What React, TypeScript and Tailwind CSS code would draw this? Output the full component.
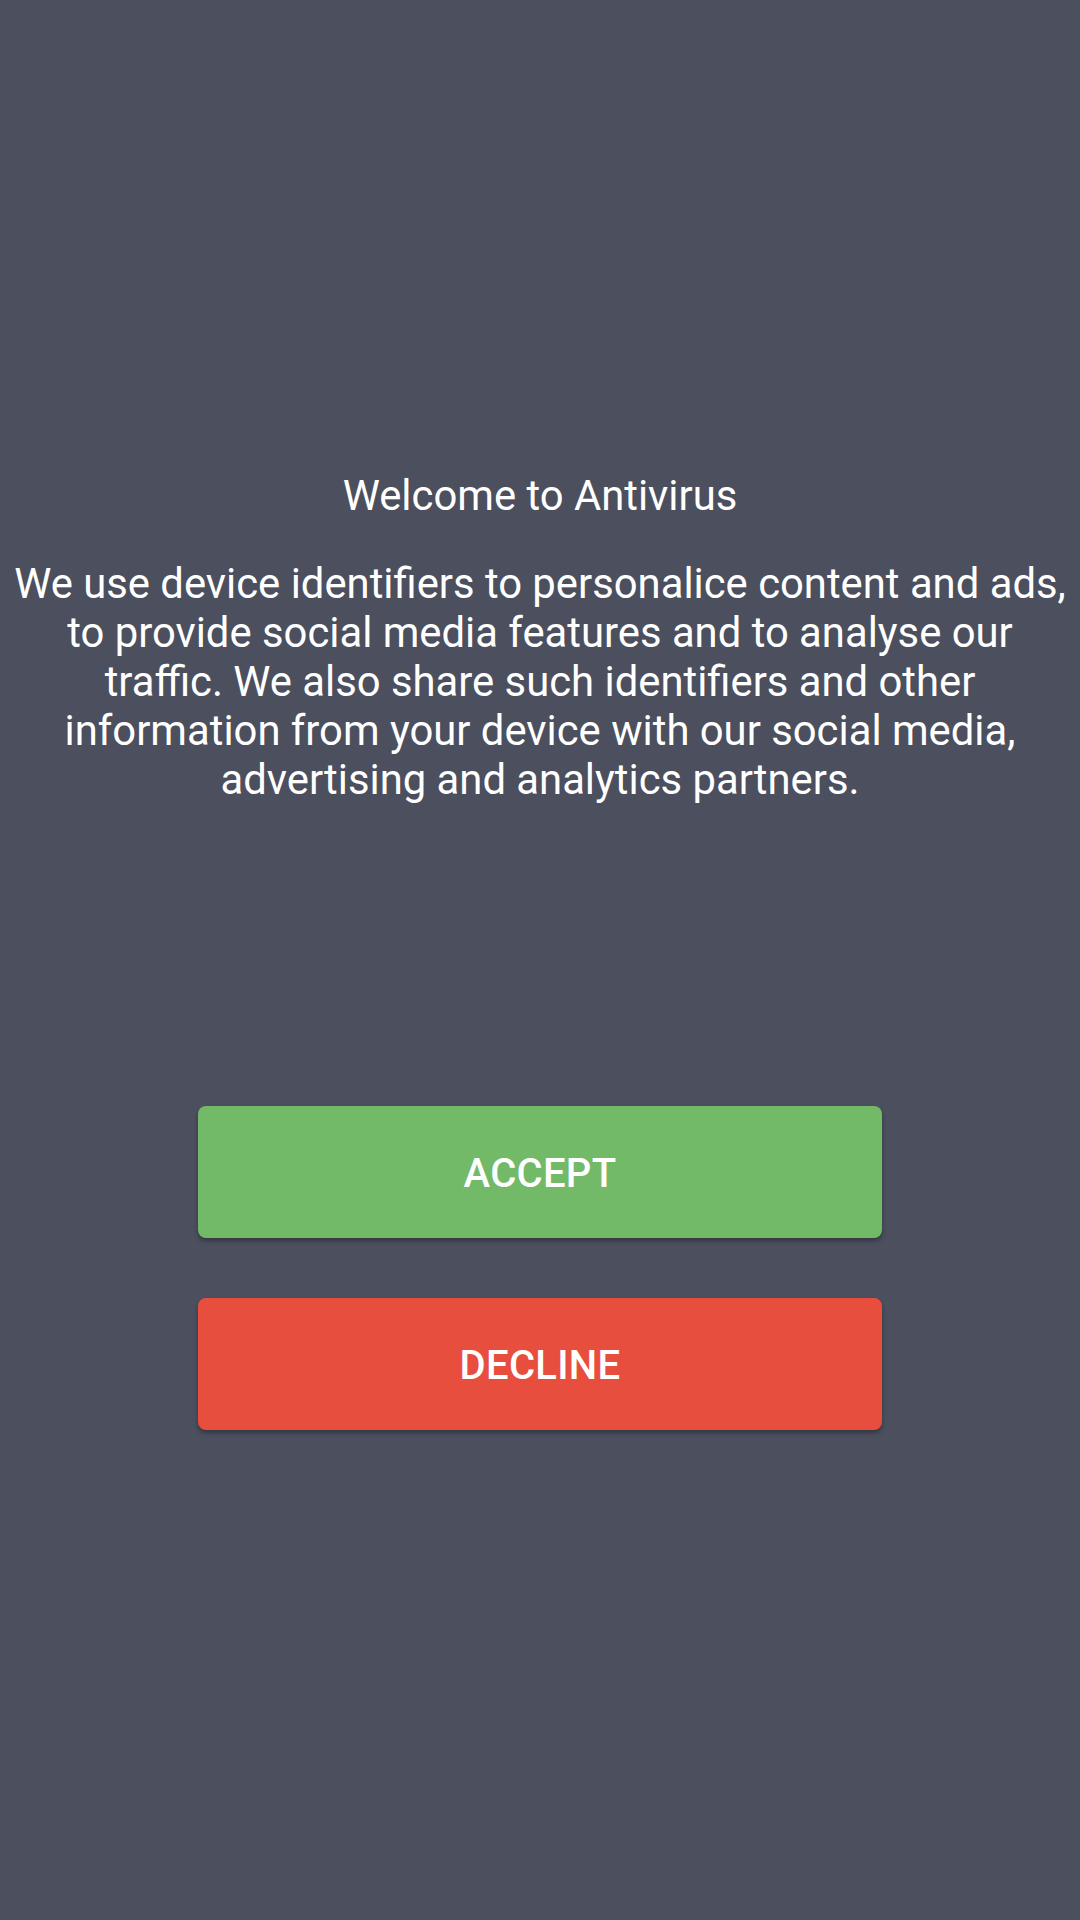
import React from "react";

export default function App() {
  const lines = [
    "We use device identifiers to personalice content and ads,",
    "to provide social media features and to analyse our",
    "traffic. We also share such identifiers and other",
    "information from your device with our social media,",
    "advertising and analytics partners.",
  ];
  return (
    <div
      className="w-[1080px] h-[1920px] bg-[#4b4f5e] flex flex-col items-center text-white"
      style={{ fontFamily: "Roboto, 'Noto Sans', sans-serif" }}
    >
      <h1 className="mt-[471px] text-[41.8px] leading-[49px] font-normal text-center">
        Welcome to Antivirus
      </h1>
      <p className="mt-[39px] text-[41.8px] leading-[49px] text-center px-[10px]">
        {lines.map((l, i) => (
          <span key={i} className="block whitespace-nowrap">
            {l}
          </span>
        ))}
      </p>
      <div className="mt-[302px] flex flex-col gap-[60px]">
        <button className="w-[684px] h-[132px] pt-[4px] rounded-[8px] bg-[#72b968] text-white text-[40px] font-medium tracking-[0.3px] shadow-[0_3px_4px_rgba(0,0,0,0.3)]">
          ACCEPT
        </button>
        <button className="w-[684px] h-[132px] pt-[4px] rounded-[8px] bg-[#e84e3e] text-white text-[40px] font-medium tracking-[0.3px] shadow-[0_3px_4px_rgba(0,0,0,0.3)]">
          DECLINE
        </button>
      </div>
    </div>
  );
}
